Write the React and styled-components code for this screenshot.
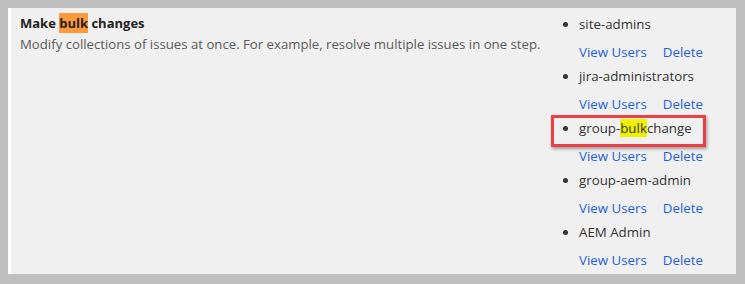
import React from 'react'
import styled, { createGlobalStyle } from 'styled-components'

const groups = [
  { name: 'site-admins' },
  { name: 'jira-administrators' },
  { name: 'group-bulkchange', mark: 'bulk', boxed: true },
  { name: 'group-aem-admin' },
  { name: 'AEM Admin' },
]

function GroupName({ name, mark }) {
  if (!mark) return name
  const i = name.indexOf(mark)
  return (
    <>
      {name.slice(0, i)}
      <YellowMark>{mark}</YellowMark>
      {name.slice(i + mark.length)}
    </>
  )
}

export default function App() {
  return (
    <>
      <GlobalStyle />
      <Frame>
        <Panel>
          <Info>
            <Title>
              Make <OrangeMark>bulk</OrangeMark> changes
            </Title>
            <Description>
              Modify collections of issues at once. For example, resolve multiple issues in one step.
            </Description>
          </Info>
          <GroupList>
            {groups.map((g) => (
              <Group key={g.name}>
                <Name $boxed={g.boxed}>
                  <GroupName name={g.name} mark={g.mark} />
                </Name>
                <Actions>
                  <Link href="#">View Users</Link>
                  <Link href="#">Delete</Link>
                </Actions>
              </Group>
            ))}
          </GroupList>
        </Panel>
      </Frame>
    </>
  )
}

const GlobalStyle = createGlobalStyle`
  * { box-sizing: border-box; }
  body {
    margin: 0;
    font-family: "Open Sans", "Noto Sans", sans-serif;
    background: #c0c0c0;
  }
`

const Frame = styled.div`
  width: 745px;
  height: 284px;
  padding: 8px 9px 10px 8px;
  background: #c0c0c0;
`

const Panel = styled.div`
  height: 100%;
  display: flex;
  justify-content: space-between;
  background: #f0f0f0;
  border-left: 3px solid #ffffff;
  padding: 5px 0 0 9px;
`

const Info = styled.div`
  display: flex;
  flex-direction: column;
`

const Title = styled.div`
  font-size: 13px;
  font-weight: 700;
  color: #222;
  line-height: 20px;
`

const OrangeMark = styled.span`
  background: #ff9a3a;
  padding: 1px 0 1px;
`

const Description = styled.div`
  margin-top: 2px;
  font-size: 13.2px;
  color: #5a5a5a;
  line-height: 18px;
`

const GroupList = styled.ul`
  margin: 0;
  padding: 0 0 0 21px;
  width: 178px;
  margin-top: -1px;
  list-style: disc;
  color: #333;
`

const Group = styled.li`
  font-size: 13.3px;
  &::marker { color: #333; }
`

const Name = styled.div`
  position: relative;
  line-height: 24px;
  margin-bottom: 4px;
  color: #333;
  ${(p) => p.$boxed && `
    &::after {
      content: '';
      position: absolute;
      left: -28px;
      top: -1px;
      width: 149px;
      height: 26px;
      border: 3px solid #ec3f45;
      box-shadow: 1px 2px 3px rgba(0, 0, 0, 0.35);
    }
  `}
`

const YellowMark = styled.span`
  background: #f0f000;
`

const Actions = styled.div`
  display: flex;
  gap: 16px;
  line-height: 24px;
`

const Link = styled.a`
  color: #1f5fd8;
  text-decoration: none;
`
